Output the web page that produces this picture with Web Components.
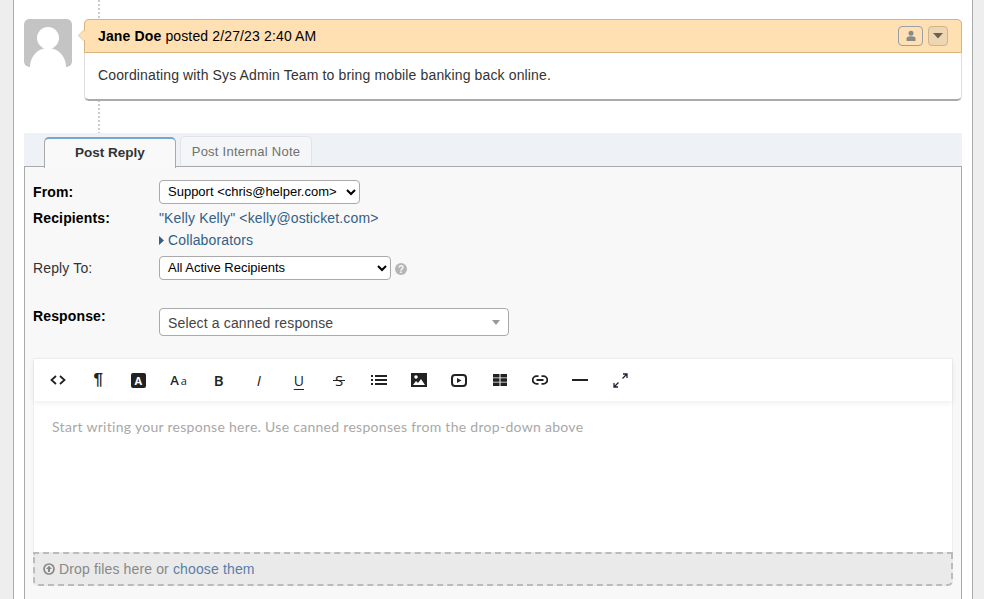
<!DOCTYPE html>
<html>
<head>
<meta charset="utf-8">
<title>Ticket thread</title>
<style>
  html, body { margin: 0; height: 599px; overflow: hidden; background: #eee; }
  body { font-family: "Liberation Sans", Arial, sans-serif; font-size: 14px; letter-spacing: .14px; color: #000; }
</style>
</head>
<body>
<ticket-page>
  <thread-entry author="Jane Doe" posted="posted 2/27/23 2:40 AM">Coordinating with Sys Admin Team to bring mobile banking back online.</thread-entry>
  <reply-panel>
    <form-row label="From:" strong top="13" height="24">
      <select style="width:201px"><option>Support &lt;chris@helper.com&gt;</option></select>
    </form-row>
    <form-row label="Recipients:" strong top="4" height="20"><span class="link">"Kelly Kelly" &lt;kelly@osticket.com&gt;</span></form-row>
    <form-row top="2" height="20"><span class="link"><collab-toggle>Collaborators</collab-toggle></span></form-row>
    <form-row label="Reply To:" top="6" height="24">
      <select style="width:232px"><option>All Active Recipients</option></select>
      <help-tip></help-tip>
    </form-row>
    <form-row label="Response:" strong tall top="28" height="28">
      <canned-picker>Select a canned response</canned-picker>
    </form-row>
    <rich-editor placeholder="Start writing your response here. Use canned responses from the drop-down above"></rich-editor>
  </reply-panel>
</ticket-page>

<script>
class TicketPage extends HTMLElement {
  constructor() {
    super();
    this.attachShadow({ mode: 'open' });
    this.shadowRoot.innerHTML = /* html */ `
    <style>
      :host {
        display: block;
        box-sizing: border-box;
        width: 960px;
        height: 599px;
        margin-left: 13px;
        padding: 0 10px;
        background: #fff;
        border-left: 1px solid #aaa;
        border-right: 1px solid #aaa;
        overflow: hidden;
      }
    </style>
    <slot></slot>
    `;
  }
}

class ThreadEntry extends HTMLElement {
  constructor() {
    super();
    this.attachShadow({ mode: 'open' });
    this.shadowRoot.innerHTML = /* html */ `
    <style>
      :host {
        display: flex;
        gap: 12px;
        box-sizing: border-box;
        height: 133px;
        padding-top: 19px;
        background: repeating-linear-gradient(#ccc 0 2px, transparent 2px 4px) 74px 0 / 2px 100% no-repeat;
      }
      .avatar { width: 48px; height: 48px; flex: none; border-radius: 5px; }
      .bubble {
        position: relative;
        flex: 1;
        height: 82px;
        box-sizing: border-box;
        background: #fff;
        border: 1px solid #ddd;
        border-bottom: 2px solid #aaa;
        border-radius: 5px;
      }
      .head {
        display: flex;
        align-items: center;
        height: 34px;
        box-sizing: border-box;
        margin: -1px -1px 0;
        padding: 0 13px 0 13px;
        background: #ffe0b3;
        border: 1px solid #d9b27c;
        border-radius: 5px 5px 0 0;
      }
      .head b { margin-right: 4px; }
      .spacer { flex: 1; }
      .arrow {
        position: absolute;
        left: -7px;
        top: 10px;
        width: 10px;
        height: 10px;
        background: #ffe0b3;
        border-left: 1px solid #e8cda4;
        border-bottom: 1px solid #e8cda4;
        transform: rotate(45deg) scale(.72);
      }
      .action {
        display: flex;
        align-items: center;
        justify-content: center;
        box-sizing: border-box;
        height: 20px;
        border-radius: 4px;
      }
      .who { width: 25px; border: 1px solid #9aa0a8; margin-right: 5px; background: #ffe0b3; }
      .more { width: 20px; border: 1px solid #ccb48f; background: #eed6b3; }
      .body { padding: 14px 13px; color: #333; line-height: 16px; }
    </style>
    <svg class="avatar" viewBox="0 0 48 48">
      <rect width="48" height="48" rx="5" fill="#c4c4c4"/>
      <circle cx="24" cy="19" r="11" fill="#fff"/>
      <path d="M6 48C6 37 14 29 24 29s18 8 18 19z" fill="#fff"/>
    </svg>
    <div class="bubble">
      <span class="arrow"></span>
      <div class="head">
        <b id="author"></b><span id="posted"></span>
        <span class="spacer"></span>
        <span class="action who">
          <svg width="12" height="12" viewBox="0 0 12 12"><circle cx="6" cy="3.2" r="2.500" fill="#8a8a8a"/><path d="M1.500 11V8.500c0-1.500 1.500-2.300 4.500-2.300s4.500.8 4.500 2.300V11z" fill="#8a8a8a"/></svg>
        </span>
        <span class="action more">
          <svg width="10" height="6" viewBox="0 0 10 6"><path d="M0 0h10L5 5.500z" fill="#6b6255"/></svg>
        </span>
      </div>
      <div class="body"><slot></slot></div>
    </div>
    `;
  }

  connectedCallback() {
    this.shadowRoot.querySelector('#author').textContent = this.getAttribute('author');
    this.shadowRoot.querySelector('#posted').textContent = this.getAttribute('posted');
  }
}

class ReplyPanel extends HTMLElement {
  constructor() {
    super();
    this.attachShadow({ mode: 'open' });
    this.shadowRoot.innerHTML = /* html */ `
    <style>
      :host { display: block; }
      .tabs {
        display: flex;
        align-items: flex-start;
        gap: 4px;
        box-sizing: border-box;
        height: 34px;
        padding: 3px 0 0 20px;
        background: #eef2f6;
        border-bottom: 1px solid #aaa;
      }
      .tab {
        box-sizing: border-box;
        width: 132px;
        text-align: center;
      }
      .active {
        height: 31px;
        margin-top: 1px;
        padding-top: 6px;
        background: #f9f9f9;
        border: 1px solid #aaa;
        border-top: 2px solid #7ba3d4;
        border-bottom: 0;
        border-radius: 5px 5px 0 0;
        font-weight: bold;
        font-size: 13.500px;
        letter-spacing: 0;
        color: #333;
      }
      .idle {
        height: 29px;
        padding-top: 7px;
        background: #f4f6f8;
        border: 1px solid #e0e4ea;
        border-bottom: 0;
        border-radius: 5px 5px 0 0;
        color: #707070;
        font-size: 13px;
        letter-spacing: .25px;
      }
      .content {
        display: flow-root;
        box-sizing: border-box;
        height: 500px;
        padding: 0 8px;
        background: #f8f8f8;
        border: 1px solid #aaa;
        border-top: 0;
        border-bottom: 0;
      }
    </style>
    <div class="tabs">
      <div class="tab active">Post Reply</div>
      <div class="tab idle">Post Internal Note</div>
    </div>
    <div class="content"><slot></slot></div>
    `;
  }
}

class FormRow extends HTMLElement {
  constructor() {
    super();
    this.attachShadow({ mode: 'open' });
    this.shadowRoot.innerHTML = /* html */ `
    <style>
      :host { display: flex; align-items: center; }
      .label { width: 126px; flex: none; color: #333; line-height: 16px; }
      :host([strong]) .label { font-weight: bold; color: #000; }
      :host([tall]) .label { align-self: flex-start; }
      .value { display: flex; align-items: center; }
      ::slotted(select) {
        box-sizing: border-box;
        height: 24px;
        padding: 0 4px 2px;
        background: #fff;
        border: 1px solid #aaa;
        border-radius: 4px;
        font: 13px "Liberation Sans", Arial, sans-serif;
        color: #000;
      }
      ::slotted(.link) { color: #336086; }
    </style>
    <div class="label" id="label"></div>
    <div class="value"><slot></slot></div>
    `;
  }

  connectedCallback() {
    this.shadowRoot.querySelector('#label').textContent = this.getAttribute('label') || '';
    this.style.marginTop = (this.getAttribute('top') || 0) + 'px';
    this.style.height = (this.getAttribute('height') || 20) + 'px';
  }
}

class CollabToggle extends HTMLElement {
  constructor() {
    super();
    this.attachShadow({ mode: 'open' });
    this.shadowRoot.innerHTML = /* html */ `
    <style>
      :host { display: inline-flex; align-items: center; gap: 4px; }
      svg { flex: none; }
    </style>
    <svg width="5" height="9" viewBox="0 0 5 9"><path d="M0 0l5 4.500L0 9z" fill="#336086"/></svg>
    <slot></slot>
    `;
  }
}

class HelpTip extends HTMLElement {
  constructor() {
    super();
    this.attachShadow({ mode: 'open' });
    this.shadowRoot.innerHTML = /* html */ `
    <style>
      :host {
        display: flex;
        align-items: center;
        justify-content: center;
        width: 12px;
        height: 12px;
        margin: 2px 0 0 4px;
        border-radius: 50%;
        background: #b5b5b5;
        color: #f8f8f8;
        font: bold 10px "Liberation Sans", Arial, sans-serif;
      }
    </style>
    ?
    `;
  }
}

class CannedPicker extends HTMLElement {
  constructor() {
    super();
    this.attachShadow({ mode: 'open' });
    this.shadowRoot.innerHTML = /* html */ `
    <style>
      :host {
        display: flex;
        align-items: center;
        box-sizing: border-box;
        width: 350px;
        height: 28px;
        padding: 0 8px;
        background: #fff;
        border: 1px solid #aaa;
        border-radius: 4px;
        color: #444;
      }
      span { flex: 1; padding-top: 2px; }
      svg { flex: none; }
    </style>
    <span><slot></slot></span>
    <svg width="8" height="5" viewBox="0 0 8 5"><path d="M0 0h8L4 5z" fill="#999"/></svg>
    `;
  }
}

class ToolButton extends HTMLElement {
  constructor() {
    super();
    this.attachShadow({ mode: 'open' });
    this.shadowRoot.innerHTML = /* html */ `
    <style>
      :host {
        display: flex;
        align-items: center;
        justify-content: center;
        width: 40.150px;
        height: 42px;
        color: #222;
        font: 14px "Open Sans", sans-serif;
        letter-spacing: 0;
      }
    </style>
    <slot></slot>
    `;
  }
}

class RichEditor extends HTMLElement {
  constructor() {
    super();
    this.attachShadow({ mode: 'open' });
    this.shadowRoot.innerHTML = /* html */ `
    <style>
      :host {
        display: block;
        margin-top: 22px;
      }
      .box {
        box-sizing: border-box;
        height: 194px;
        background: #fff;
        border: 1px solid #eee;
        border-bottom: 0;
      }
      .bar {
        display: flex;
        padding-left: 4px;
        background: #fff;
        box-shadow: 0 2px 6px rgba(0,0,0,.07);
      }
      .text {
        padding: 17px 18px;
        color: #a8a8a8;
        font: 14px Lato, sans-serif;
        letter-spacing: .29px;
      }
      svg { display: block; }
      .pil { font: bold 17px "Liberation Sans", sans-serif; }
      .rev { background: #222; color: #fff; width: 15px; height: 15px; border-radius: 2px; display: flex; align-items: center; justify-content: center; font: bold 11px "Open Sans", sans-serif; }
      .aa { font-size: 13px; font-weight: 600; }
      .aa span { font-size: 11px; font-weight: 400; margin-left: 2px; }
      .b { font-weight: 600; font-size: 15px; }
      .i { font-style: italic; font-size: 15px; }
      .u { font-size: 14px; text-decoration: underline; text-underline-offset: 3px; }
      .s { font-size: 15px; padding: 0 2px; background: linear-gradient(#222, #222) center / 100% 1px no-repeat; }
    </style>
    <div class="box">
      <div class="bar">
        <tool-button><svg width="16" height="10" viewBox="0 0 16 10" fill="none" stroke="#222" stroke-width="1.800"><path d="M6 1L1.500 5 6 9M10 1l4.500 4L10 9"/></svg></tool-button>
        <tool-button><span class="pil">¶</span></tool-button>
        <tool-button><span class="rev">A</span></tool-button>
        <tool-button><span class="aa">A<span>a</span></span></tool-button>
        <tool-button><span class="b">B</span></tool-button>
        <tool-button><span class="i">I</span></tool-button>
        <tool-button><span class="u">U</span></tool-button>
        <tool-button><span class="s">S</span></tool-button>
        <tool-button><svg width="16" height="12" viewBox="0 0 16 12" fill="#222"><path d="M0 1h2v2H0zM4 1h12v2H4zM0 5h2v2H0zM4 5h12v2H4zM0 9h2v2H0zM4 9h12v2H4z"/></svg></tool-button>
        <tool-button><svg width="16" height="14" viewBox="0 0 16 14"><rect width="16" height="14" fill="#222"/><circle cx="5" cy="4" r="1.800" fill="#fff"/><path d="M2 12l3-4 2 2 3-4 4 6z" fill="#fff"/></svg></tool-button>
        <tool-button><svg width="16" height="13" viewBox="0 0 16 13"><rect x="1" y="1" width="14" height="11" rx="3" fill="none" stroke="#222" stroke-width="2"/><path d="M6 4l4.500 2.500L6 9z" fill="#222"/></svg></tool-button>
        <tool-button><svg width="14" height="12" viewBox="0 0 14 12" fill="#222"><path d="M0 0h6.500v3.500H0zM7.500 0H14v3.500H7.500zM0 4.250h6.500v3.500H0zM7.500 4.250H14v3.500H7.500zM0 8.500h6.500V12H0zM7.500 8.500H14V12H7.500z"/></svg></tool-button>
        <tool-button><svg width="16" height="10" viewBox="0 0 16 10" fill="none" stroke="#222" stroke-width="1.800"><path d="M6.500 1.200H4.500a3.800 3.800 0 0 0 0 7.600h2M9.500 1.200h2a3.800 3.800 0 0 1 0 7.600h-2M4.500 5h7"/></svg></tool-button>
        <tool-button><svg width="16" height="2" viewBox="0 0 16 2"><rect width="16" height="2" fill="#222"/></svg></tool-button>
        <tool-button><svg width="15" height="15" viewBox="0 0 15 15" fill="none" stroke="#223" stroke-width="1.300"><path d="M1 14l4.500-4.500M9.500 5.500L14 1M10 1h4v4M1 10v4h4"/></svg></tool-button>
      </div>
      <div class="text" id="ph"></div>
    </div>
    <drop-zone></drop-zone>
    `;
  }

  connectedCallback() {
    this.shadowRoot.querySelector('#ph').textContent = this.getAttribute('placeholder');
  }
}

class DropZone extends HTMLElement {
  constructor() {
    super();
    this.attachShadow({ mode: 'open' });
    this.shadowRoot.innerHTML = /* html */ `
    <style>
      :host {
        display: flex;
        align-items: center;
        gap: 4px;
        box-sizing: border-box;
        height: 34px;
        padding-left: 8px;
        background: #eaeaea;
        border: 2px dashed #bbb;
        border-radius: 0 0 5px 5px;
        color: #888;
      }
      a { color: #5a7ea6; }
      svg { flex: none; }
    </style>
    <svg width="12" height="12" viewBox="0 0 12 12"><circle cx="6" cy="6" r="5" fill="none" stroke="#888" stroke-width="1.700"/><path d="M6 2.800L9 6H7v3H5V6H3z" fill="#888"/></svg>
    <span>Drop files here or <a>choose them</a></span>
    `;
  }
}

customElements.define('ticket-page', TicketPage);
customElements.define('thread-entry', ThreadEntry);
customElements.define('reply-panel', ReplyPanel);
customElements.define('form-row', FormRow);
customElements.define('collab-toggle', CollabToggle);
customElements.define('help-tip', HelpTip);
customElements.define('canned-picker', CannedPicker);
customElements.define('tool-button', ToolButton);
customElements.define('rich-editor', RichEditor);
customElements.define('drop-zone', DropZone);
</script>
</body>
</html>
